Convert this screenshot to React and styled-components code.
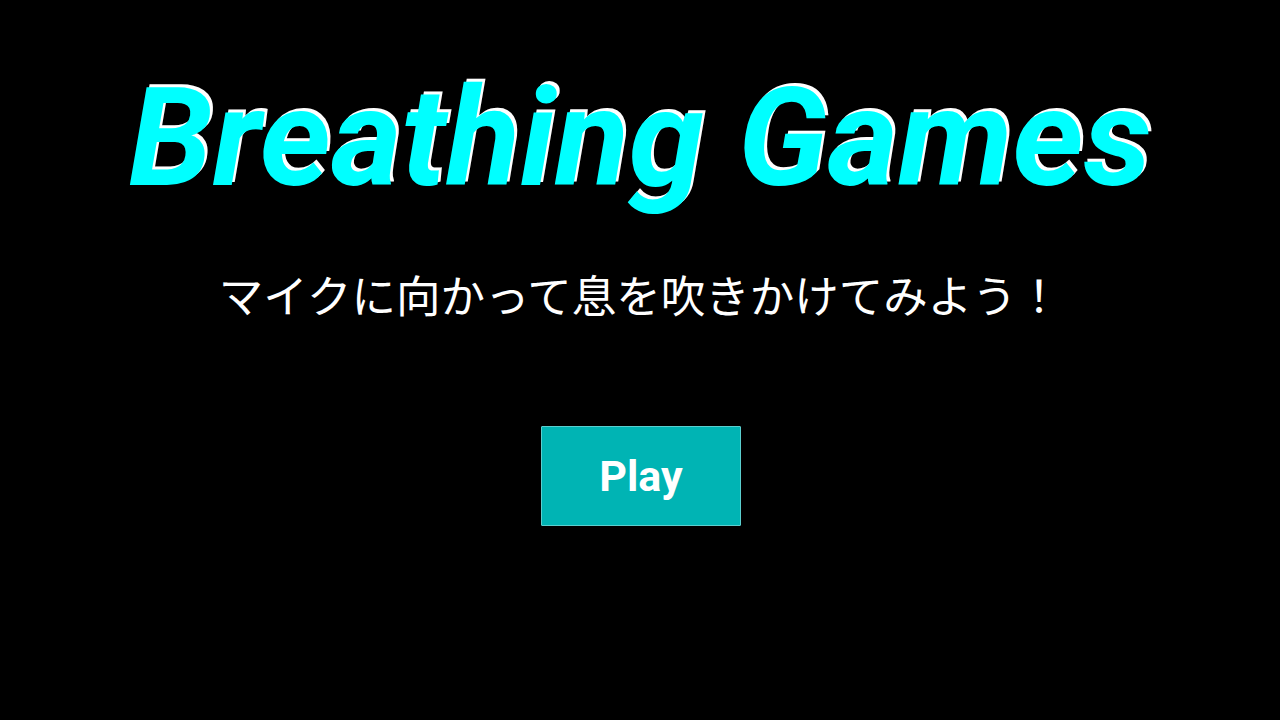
import React from 'react'
import styled, { createGlobalStyle } from 'styled-components';

const GlobalStyle = createGlobalStyle`
  html, body {
    margin: 0;
    padding: 0;
    background: #000000;
  }
  body {
    font-family: Roboto, "Noto Sans CJK JP", sans-serif;
  }
`;

function App() {
  return (
    <>
      <GlobalStyle />
      <Screen>
        <Title>Breathing Games</Title>
        <Subtitle>マイクに向かって息を吹きかけてみよう！</Subtitle>
        <PlayButton type="button">Play</PlayButton>
      </Screen>
    </>
  )
}

export default App

const Screen = styled.div`
  width: 1280px;
  height: 720px;
  display: flex;
  flex-direction: column;
  align-items: center;
  background: #000000;
  overflow: hidden;
`;
const Title = styled.h1`
  margin: 64px 0 0 0;
  color: #00ffff;
  font-family: Roboto, sans-serif;
  font-size: 136px;
  font-weight: 700;
  font-style: italic;
  line-height: 150px;
  white-space: nowrap;
  text-shadow: 3px -3px 0 #ffffff;
`;
const Subtitle = styled.div`
  margin: 50px 0 0 0;
  color: #ffffff;
  font-family: "Noto Sans CJK JP", sans-serif;
  font-size: 44.5px;
  font-weight: 400;
  line-height: 60px;
  white-space: nowrap;
`;
const PlayButton = styled.button`
  margin: 102px 0 0 2px;
  width: 200px;
  height: 100px;
  display: flex;
  justify-content: center;
  align-items: center;
  background-color: #00b4b4;
  border: 1px solid #5ccfcf;
  border-radius: 1px;
  color: #ffffff;
  font-family: Roboto, sans-serif;
  font-size: 43px;
  font-weight: 700;
  cursor: pointer;
`;
